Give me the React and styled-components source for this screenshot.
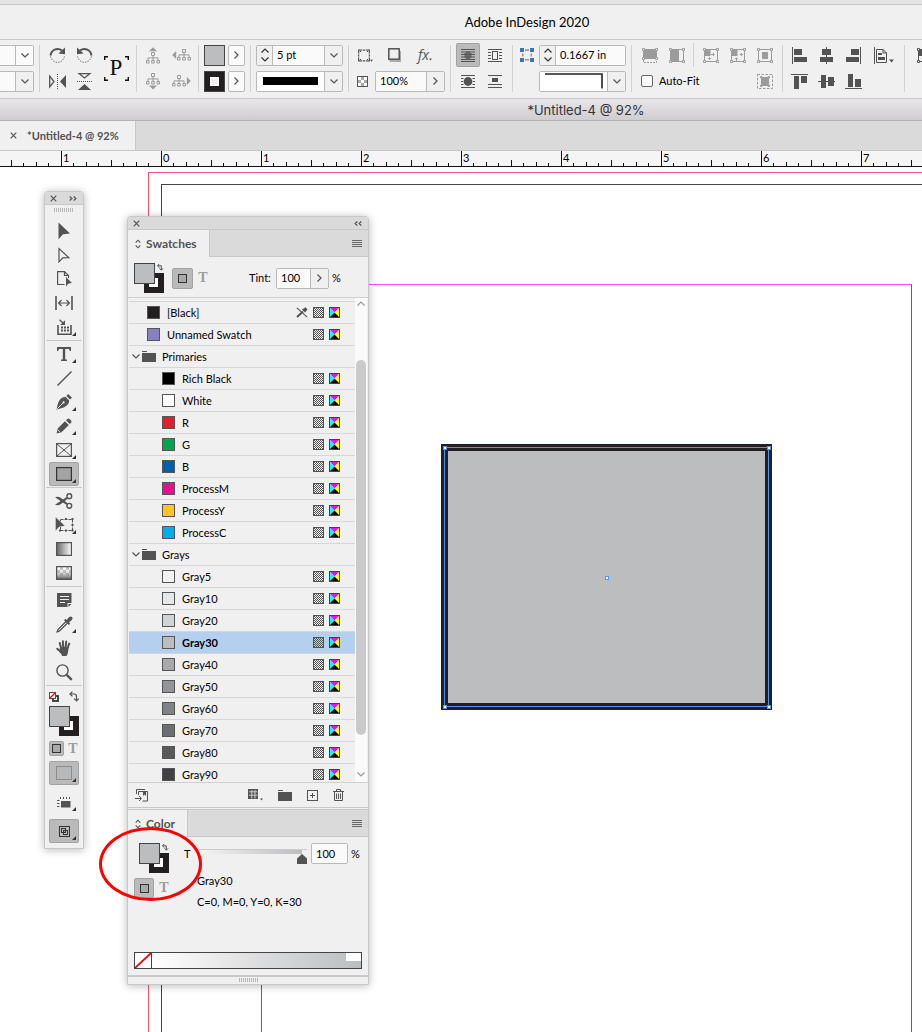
import React, { useEffect, useState } from "react";
import styled, { createGlobalStyle, css } from "styled-components";

const ink = "#535353";
const faint = "#9b9b9b";
const line = "#c8c8c8";

const Global = createGlobalStyle`
  * { box-sizing: border-box; }
  body { margin: 0; background: #fff; font-family: Lato, "Liberation Sans", sans-serif; font-size: 11px; line-height: 16px; color: #000; }
  button, input { font: inherit; color: inherit; padding: 0; margin: 0; }
  button { background: none; border: 0; }
  svg { display: block; flex: none; }
  ul { list-style: none; margin: 0; padding: 0; }
`;

/* ---------- application frame ---------- */
const Frame = styled.div`
  display: flex;
  flex-direction: column;
  min-height: 100vh;
  overflow: hidden;
`;
const MenuStrip = styled.div`
  height: 5px;
  background: #e4e4e4;
  border-bottom: 1px solid ${line};
`;
const AppTitle = styled.header`
  height: 35px;
  line-height: 34px;
  padding-left: 132px;
  text-align: center;
  font-size: 13px;
  background: #f0f0f0;
  border-bottom: 1px solid ${line};
`;
const DocTitle = styled.div`
  height: 22px;
  line-height: 23px;
  padding-left: 250px;
  text-align: center;
  font-family: Inter, sans-serif;
  font-size: 13px;
  color: #333;
  background: linear-gradient(#e9e6ea, #cfcdd0);
  border-bottom: 1px solid #b3b1b4;
`;
const TabBar = styled.nav`
  display: flex;
  height: 30px;
  background: #dadada;
  border-bottom: 1px solid ${line};
`;
const DocTab = styled.div`
  display: flex;
  align-items: center;
  gap: 10px;
  width: 136px;
  padding-left: 10px;
  font-weight: 700;
  color: ${ink};
  background: #f0f0f0;
  border-right: 1px solid ${line};
`;

/* ---------- control bar ---------- */
const ControlBar = styled.div`
  display: flex;
  align-items: center;
  height: 59px;
  padding-bottom: 2px;
  background: #f0f0f0;
  border-bottom: 1px solid ${line};
  overflow: hidden;
`;
const Divider = styled.div`
  flex: none;
  width: 1px;
  height: ${(p) => p.$h || 47}px;
  margin: 0 ${(p) => p.$gap || 0}px;
  background: #d0d0d0;
`;
const Group = styled.div`
  flex: none;
  display: flex;
  flex-direction: column;
  width: ${(p) => p.$w}px;
  padding-left: ${(p) => p.$pad || 0}px;
`;
const GroupRow = styled.div`
  display: flex;
  align-items: center;
  height: 26px;
  gap: ${(p) => p.$gap || 0}px;
`;
const IconButton = styled.button`
  flex: none;
  display: flex;
  align-items: center;
  justify-content: center;
  width: ${(p) => p.$w || 27}px;
  height: ${(p) => p.$h || 24}px;
  color: ${(p) => (p.$faint ? faint : ink)};
`;
const Pressed = css`
  background: #bababa;
  border: 1px solid #a3a3a3;
  border-radius: 2px;
`;
const ToggleButton = styled(IconButton)`
  ${(p) => p.$on && Pressed}
`;
const FxButton = styled(IconButton)`
  font-family: "Open Sans", sans-serif;
  font-size: 14px;
  font-style: italic;
`;
const Combo = styled.div`
  display: flex;
  flex: none;
  width: ${(p) => p.$w}px;
  height: 21px;
  background: #fafafa;
  border: 1px solid #b9b9b9;
  border-radius: 2px;
  overflow: hidden;
  ${(p) => p.$cut && "border-left: 0; border-radius: 0 2px 2px 0;"}
`;
const ComboInput = styled.input`
  flex: 1;
  min-width: 0;
  padding-left: 4px;
  border: 0;
  background: #fafafa;
  outline: 0;
`;
const ComboArrow = styled.button`
  flex: none;
  display: flex;
  align-items: center;
  justify-content: center;
  width: 18px;
  background: ${(p) => (p.$light ? "#fafafa" : "#f0f0f0")};
  border-left: 1px solid #b9b9b9;
`;
const Spinner = styled.div`
  display: flex;
  flex-direction: column;
  justify-content: center;
  align-items: center;
  gap: 4px;
  width: 16px;
  background: #f0f0f0;
  border-right: 1px solid #b9b9b9;
`;
const SpinButton = styled.button`
  display: block;
  height: 5px;
`;
const StrokePreview = styled.button`
  flex: 1;
  display: flex;
  align-items: center;
  justify-content: center;
  background: #fff;
`;
const ArrowButton = styled(IconButton)`
  width: 17px;
  height: 21px;
  background: #fafafa;
  border: 1px solid #b9b9b9;
  border-radius: 2px;
`;
const CheckLabel = styled.label`
  display: flex;
  align-items: center;
  gap: 6px;
  width: 112px;
  padding-left: 5px;
`;
const Check = styled.input`
  appearance: none;
  width: 12px;
  height: 12px;
  background: #fafafa;
  border: 1px solid #666;
  border-radius: 2px;
`;

/* ---------- ruler ---------- */
const RulerBar = styled.div`
  display: flex;
  height: 16px;
  padding-left: 61px;
  background: #f5f5f5;
  border-bottom: 1px solid #111;
  overflow: hidden;
`;
const Inch = styled.div`
  position: relative;
  flex: none;
  width: 100px;
  height: 15px;
  padding-left: 1px;
  line-height: 13px;
  border-left: 1px solid #111;
  &:first-child { margin-left: -100px; }
`;
const Ticks = styled.svg`
  position: absolute;
  left: 0;
  bottom: 0;
`;

/* ---------- document canvas ---------- */
const Canvas = styled.main`
  position: relative;
  flex: 1;
  min-height: 865px;
  background: #fff;
  overflow: hidden;
`;
const Bleed = styled.div`
  position: absolute;
  inset: 5px -40px -40px 148px;
  border: 1px solid #f0596b;
`;
const Page = styled.div`
  position: absolute;
  inset: 17px -30px -30px 161px;
  border: 1px solid #444;
`;
const Margins = styled.div`
  position: absolute;
  inset: 117px auto -30px 261px;
  width: 651px;
  border: 1px solid #9438e0;
  border-top-color: #ff4dff;
`;
const Shape = styled.div`
  position: absolute;
  left: 441px;
  top: 277px;
  width: 331px;
  height: 266px;
  padding: 3px;
  background: #231f20;
`;
const ShapeFill = styled.div`
  width: 100%;
  height: 100%;
  background: #bcbdbf;
  border: 4px solid #231f20;
  outline: 1px solid #4b95ff;
  outline-offset: -1px;
`;
const Handle = styled.span`
  position: absolute;
  width: 4px;
  height: 4px;
  background: #fff;
  border: 1px solid #4b95ff;
  ${(p) => p.$at}
`;

/* ---------- floating panels ---------- */
const Floating = styled.section`
  position: absolute;
  left: ${(p) => p.$x}px;
  top: ${(p) => p.$y}px;
  width: ${(p) => p.$w}px;
  background: #f0f0f0;
  border: 1px solid ${line};
  border-radius: 4px 4px 0 0;
  box-shadow: 0 1px 8px rgba(0, 0, 0, 0.28);
`;
const PanelHead = styled.div`
  display: flex;
  align-items: center;
  justify-content: space-between;
  height: 13px;
  padding: 0 6px 0 5px;
  background: #dadada;
  border-bottom: 1px solid ${line};
  border-radius: 3px 3px 0 0;
  color: #666;
`;
const HeadButton = styled.button`
  display: block;
  color: ${ink};
`;
const Grip = styled.div`
  width: 19px;
  height: 4px;
  margin: ${(p) => p.$m};
  background: repeating-linear-gradient(90deg, #b8b8b8 0 1px, transparent 1px 2px);
`;
const ToolButton = styled.button`
  position: relative;
  display: flex;
  align-items: center;
  justify-content: center;
  width: 30px;
  height: 24px;
  margin-left: 4px;
  color: ${ink};
  ${(p) => p.$on && Pressed}
  ${(p) => p.$more && css`
    &::after {
      content: "";
      position: absolute;
      right: ${p.$on ? 2 : 3}px;
      bottom: ${p.$on ? 2 : 3}px;
      border: 2px solid transparent;
      border-right-color: #333;
      border-bottom-color: #333;
    }
  `}
`;
const ToolRule = styled.div`
  height: 1px;
  margin: 1px;
  background: ${line};
`;
const ToolRow = styled.div`
  display: flex;
  align-items: center;
  justify-content: space-between;
  height: ${(p) => p.$h}px;
  padding: 0 4px;
`;
const ToolStack = styled.div`
  display: flex;
  flex-direction: column;
  gap: 5px;
  padding: 0 0 5px;
`;
const GlyphT = styled.span`
  width: 12px;
  text-align: center;
  font-family: "Liberation Serif", serif;
  font-weight: 700;
  font-size: 14px;
  color: ${faint};
`;

const TabRow = styled.div`
  display: flex;
  height: 27px;
  background: #f0f0f0;
`;
const PanelTab = styled.h2`
  display: flex;
  align-items: center;
  gap: 5px;
  width: ${(p) => p.$w}px;
  margin: 0;
  padding-left: 7px;
  font-size: 12px;
  font-weight: 700;
  color: ${ink};
`;
const TabRest = styled.div`
  flex: 1;
  display: flex;
  align-items: center;
  justify-content: flex-end;
  padding-right: 6px;
  background: #dadada;
  border-left: 1px solid ${line};
  border-bottom: 1px solid ${line};
`;
const TintBar = styled.div`
  display: flex;
  align-items: center;
  height: 41px;
  padding: 2px 0 0 6px;
  border-bottom: 1px solid #d0d0d0;
`;
const SmallToggle = styled.button`
  display: flex;
  align-items: center;
  justify-content: center;
  width: ${(p) => p.$s}px;
  height: ${(p) => p.$s}px;
  ${Pressed}
`;
const TintToggles = styled.div`
  display: flex;
  align-items: center;
  gap: 4px;
  margin-left: 8px;
`;
const TintLabel = styled.label`
  width: 27px;
  margin-left: 40px;
  white-space: nowrap;
`;
const ListWrap = styled.div`
  display: flex;
  height: 485px;
  padding: 0 1px;
  border-bottom: 1px solid #d0d0d0;
`;
const List = styled.ul`
  flex: 1;
  padding-top: 3px;
  overflow: hidden;
  background: #f0f0f0;
`;
const SwatchRow = styled.li`
  display: flex;
  align-items: center;
  height: 22px;
  padding: 0 15px 0 ${(p) => (p.$depth ? 33 : 18)}px;
  border-top: 1px solid #d6d6d6;
  background: ${(p) => (p.$on ? "#b4d0ee" : "transparent")};
  font-weight: ${(p) => (p.$on ? 700 : 400)};
`;
const FolderRow = styled(SwatchRow)`
  gap: 2px;
  padding-left: 3px;
`;
const FolderIcon = styled.span`
  color: ${ink};
`;
const FolderName = styled.span`
  padding-left: 4px;
`;
const Chip = styled.span`
  width: 13px;
  height: 13px;
  margin-right: 7px;
  background: ${(p) => p.$c};
  border: 1px solid #555;
`;
const Name = styled.span`
  flex: 1;
`;
const Marks = styled.span`
  display: flex;
  align-items: center;
  gap: 5px;
  color: ${ink};
`;
const Scroll = styled.div`
  display: flex;
  flex-direction: column;
  align-items: center;
  width: 12px;
  padding: 3px 0 5px;
  background: #fafafa;
`;
const ScrollThumb = styled.div`
  width: 10px;
  height: 375px;
  margin: 54px 0 auto;
  border-radius: 5px;
  background: #cacaca;
`;
const PanelFoot = styled.div`
  display: flex;
  align-items: center;
  height: 25px;
  padding: 0 24px 0 7px;
  border-bottom: 1px solid ${line};
`;
const FootButtons = styled.div`
  display: flex;
  align-items: center;
  gap: 15px;
  margin-left: auto;
`;
const ColorPanel = styled.div`
  position: relative;
  margin-top: 1px;
  border-top: 1px solid ${line};
`;
const ColorBody = styled.div`
  display: flex;
  flex-direction: column;
  justify-content: space-between;
  height: 140px;
  padding: 6px;
  border-bottom: 2px solid ${line};
`;
const ColorTop = styled.div`
  display: flex;
`;
const ColorSide = styled.div`
  width: 50px;
`;
const SideSwatch = styled.div`
  padding-left: 5px;
  margin-bottom: 5px;
`;
const SideToggle = styled.div`
  display: flex;
  align-items: center;
  gap: 4px;
`;
const ColorMain = styled.div`
  flex: 1;
`;
const SliderRow = styled.div`
  display: flex;
  align-items: center;
  height: 21px;
  margin-bottom: 6px;
`;
const SliderLabel = styled.label`
  width: 15px;
`;
const Slider = styled.input`
  appearance: none;
  width: 108px;
  height: 21px;
  margin-right: 4px;
  background: none;
  &::-webkit-slider-runnable-track {
    height: 5px;
    margin-bottom: 4px;
    border-top: 1px solid #ccc;
    background: linear-gradient(90deg, #f4f4f4, #bcbdbf) 0 0 / 103px 4px no-repeat;
  }
  &::-webkit-slider-thumb {
    appearance: none;
    width: 10px;
    height: 10px;
    margin-top: 4px;
    background: ${ink};
    clip-path: polygon(50% 0, 100% 45%, 100% 100%, 0 100%, 0 45%);
  }
`;
const Percent = styled.span`
  padding-left: 3px;
`;
const Readout = styled.p`
  margin: 0;
  padding-left: 13px;
  line-height: 21px;
`;
const Ramp = styled.button`
  display: flex;
  justify-content: space-between;
  width: 100%;
  height: 17px;
  border: 1px solid #444;
  background: linear-gradient(90deg, #fff 18px, #bcbdbf);
`;
const White = styled.span`
  width: 15px;
  height: 8px;
  background: #fff;
`;
const Annotation = styled.div`
  position: absolute;
  left: -29px;
  top: 17px;
  width: 103px;
  height: 74px;
  border: 3px solid #f00;
  border-radius: 50%;
`;

/* ---------- drawings ---------- */
const I = ({ w, h, children, ...rest }) => (
  <svg width={w} height={h} viewBox={`0 0 ${w} ${h}`} fill="none" stroke="currentColor" aria-hidden="true" {...rest}>
    {children}
  </svg>
);
const F = { fill: "currentColor", stroke: "none" };

const Down = ({ c = ink }) => <I w={8} h={5} stroke={c}><path d="M.5 .5L4 4L7.5 .5" strokeWidth="1.2" /></I>;
const Up = ({ c = "#333" }) => <I w={8} h={5} stroke={c}><path d="M.5 4.5L4 1L7.5 4.5" strokeWidth="1.2" /></I>;
const Right = () => <I w={5} h={8} stroke={ink}><path d="M.5 .5L4 4L.5 7.5" strokeWidth="1.2" /></I>;
const Close = ({ s = 7 }) => <I w={s} h={s}><path d={`M.7 .7L${s - 0.7} ${s - 0.7}M${s - 0.7} .7L.7 ${s - 0.7}`} strokeWidth="1.2" /></I>;
const DoubleRight = () => <I w={8} h={5}><path d="M.7 .5L2.9 2.5L.7 4.5M4.7 .5L6.9 2.5L4.7 4.5" strokeWidth="1.2" /></I>;
const DoubleLeft = () => <I w={8} h={5}><path d="M3.3 .5L1.1 2.5L3.3 4.5M7.3 .5L5.1 2.5L7.3 4.5" strokeWidth="1.2" /></I>;
const UpDown = () => <I w={6} h={10}><path d="M.7 3.6L3 1.2L5.3 3.6M.7 6.4L3 8.8L5.3 6.4" strokeWidth="1.1" /></I>;
const MenuIcon = () => <I w={10} h={8} stroke="#666"><path d="M0 1.5H10M0 3.5H10M0 5.5H10M0 7.5H10" /></I>;

const Rotate = ({ ccw }) => (
  <I w={17} h={17}><g transform={ccw ? "translate(17 0) scale(-1 1)" : undefined}>
    <path d="M1.6 8.5A7 7 0 0 1 12.8 3.4" strokeWidth="2" />
    <path d="M16 .6V7.2L9.4 6.4Z" {...F} />
    <path d="M1.6 9.5A7 7 0 0 0 15.4 9.5" strokeDasharray="1.2 1.4" />
  </g></I>
);
const FlipH = () => <I w={17} h={15}><path d="M.7 2.2L5 7.5L.7 12.8Z" strokeWidth="1.3" /><path d="M8.5 0V15" strokeDasharray="1 1" /><path d="M17 1V14L11 7.5Z" {...F} /></I>;
const FlipV = () => <I w={15} h={17}><path d="M2.2 .7H12.8L7.5 5Z" strokeWidth="1.3" /><path d="M0 8.5H15" strokeDasharray="1 1" /><path d="M1 17H14L7.5 11Z" {...F} /></I>;
const ParaP = () => (
  <I w={25} h={25} stroke="#111"><path d="M.7 4V.7H4M21 .7H24.3V4M24.3 21V24.3H21M4 24.3H.7V21" strokeWidth="1.4" />
    <text x="5.5" y="19" fontFamily="Liberation Serif, serif" fontSize="23" fill="#111" stroke="none">P</text></I>
);
const tree = <path d="M5.5 .5H8.5V3.5H5.5ZM7 3.5V6M2 8V5.9H12V8M7 6V8M.5 8.5H3V11H.5ZM5.7 8.5H8.3V11H5.7ZM11 8.5H13.5V11H11Z" />;
const TreeUp = () => <I w={14} h={17}><path d="M3 4.2H11L7 .2Z" {...F} /><g transform="translate(0 5)">{tree}</g></I>;
const TreeDown = () => <I w={14} h={17}>{tree}<path d="M3 12.6H11L7 16.6Z" {...F} /></I>;
const TreeLeft = () => <I w={19} h={12}><path d="M4.2 2V10L.2 6Z" {...F} /><g transform="translate(5 0)">{tree}</g></I>;
const TreeRight = () => <I w={19} h={12}>{tree}<path d="M14.8 2V10L18.8 6Z" {...F} /></I>;

const FillBox = () => <I w={21} h={21}><rect x=".5" y=".5" width="20" height="20" fill="#bcbdbf" stroke="#444" /></I>;
const StrokeBox = () => <I w={21} h={21} stroke="none"><rect x=".5" y=".5" width="20" height="20" fill="#231f20" stroke="#444" /><rect x="6" y="6" width="9" height="9" fill="#fff" /><rect x="7.5" y="7.5" width="6" height="6" fill="#eee" /></I>;
const FillStroke = ({ swap = true }) => (
  <I w={30} h={30} stroke="none">
    <rect x="10" y="10" width="20" height="20" fill="#231f20" />
    <rect x="15" y="15" width="9" height="9" fill="#fff" />
    <rect x=".5" y=".5" width="20" height="20" fill="#bcbdbf" stroke="#444" />
    {swap && <path d="M24 2.8H27.3V7M25.2 1L23.4 2.8L25.2 4.6M25.5 5.4L27.3 7.2L29.1 5.4" fill="none" stroke={ink} />}
  </I>
);
const MiniBox = ({ s = 9 }) => <I w={s} h={s}><rect x=".5" y=".5" width={s - 1} height={s - 1} fill="#aaa" stroke="#333" /></I>;

const CornerIcon = () => <I w={15} h={13}><rect x=".6" y="1.1" width="10.8" height="10.8" strokeWidth="1.2" /><path d="M4 1H5M7 1H8M4 12H5M7 12H8M.5 4.5V5.5M.5 7.5V8.5M11.5 4.5V5.5M11.5 7.5V8.5" stroke="#f0f0f0" strokeWidth="1.4" /><path d="M2 2.5H3.2M9 2.5H10M2 10.5H3.2M9 10.5H10" /><path d="M12 10.8H15L13.5 12.8Z" {...F} /></I>;
const ShadowIcon = () => <I w={13} h={14}><path d="M1.5 13H12.5V3" stroke="#aaa" strokeWidth="2" /><rect x=".8" y=".8" width="10.4" height="10.4" fill="#eee" strokeWidth="1.5" /></I>;
const MoreMark = () => <I w={3} h={12}><path d="M0 9.5H3L1.5 11.5Z" {...F} /></I>;
const CheckerIcon = () => <I w={11} h={11}><rect x=".5" y=".5" width="10" height="10" fill="#fff" /><path d="M4 1h3v3H4zM1 4h3v3H1zM7 4h3v3H7zM4 7h3v3H4z" fill="#aaa" stroke="none" /></I>;
const WrapNone = () => <I w={14} h={13}><path d="M0 .5H14M0 3H14M0 5.5H14M0 8H14M0 10.5H14M0 12.5H14" /><path d="M5 2.5h4v1.5h1.5v5H9v1.6H5V9H3.5V4H5z" {...F} opacity=".75" /></I>;
const WrapBox = () => <I w={14} h={13}><path d="M0 .5H14M0 12.5H14M0 3.5H3M0 6.5H3M0 9.5H3M11 3.5H14M11 6.5H14M11 9.5H14" /><rect x="4.5" y="2.5" width="5" height="8" /></I>;
const WrapShape = () => <I w={14} h={13}><path d="M0 .5H14M0 12.5H14M0 3.5H2.5M0 6.5H2M0 9.5H2.5M11.5 3.5H14M12 6.5H14M11.5 9.5H14" /><circle cx="7" cy="6.5" r="4.4" {...F} /></I>;
const WrapJump = () => <I w={14} h={13}><path d="M0 .5H14M0 9.5H14M0 12.5H14" /><rect x="4" y="3" width="6" height="4" {...F} /></I>;
const BlueCorners = () => <I w={14} h={14} stroke="none"><path d="M0 0h4v4H0zM10 0h4v4h-4zM0 10h4v4H0zM10 10h4v4h-4z" fill="#3f72b8" /><path d="M5 1.3h4v1.6H5zM5 11h4v1.6H5zM2 5.5h1.6v3H2zM10.5 5.5H12v3h-1.5z" fill="#9a9a9a" /></I>;
const nodes = (w, h) => <path d={`M.5 .5h2v2h-2zM${w - 2.5} .5h2v2h-2zM.5 ${h - 2.5}h2v2h-2zM${w - 2.5} ${h - 2.5}h2v2h-2z`} fill="#f0f0f0" />;
const FitFrame = ({ kind }) => (
  <I w={16} h={15}>
    <rect x="1.5" y="1.5" width="13" height={kind === 0 ? 9 : 12} />
    {kind === 0 && <><rect x="1.5" y="1.5" width="13" height="9" fill="currentColor" /><path d="M1.5 12V14.5H14.5V12" strokeDasharray="2 1" />{nodes(16, 12)}</>}
    {kind === 1 && <rect x="2" y="2" width="8" height="11" {...F} />}
    {kind === 2 && <><rect x="2" y="2" width="5.5" height="6" {...F} /><path d="M8 6.5H11M6.5 9V11.5M9.8 5L11.3 6.5L9.8 8M5 10.2L6.5 11.7L8 10.2" /></>}
    {kind === 3 && <><rect x="2" y="2" width="5.5" height="6" {...F} /><path d="M10.5 6.5H13M6.5 10V13M11.8 5L10.3 6.5L11.8 8M5 11.3L6.5 9.8L8 11.3" /></>}
    {kind === 4 && <rect x="5" y="4" width="6" height="7" {...F} />}
    {kind !== 0 && nodes(16, 15)}
  </I>
);
const FitAll = () => <I w={16} h={15}><rect x=".5" y=".5" width="15" height="14" strokeDasharray="2.5 1.5" /><rect x="4" y="3" width="8" height="9" {...F} /><path d="M3.5 2.5h1.5v1.5H3.5zM11 2.5h1.5v1.5H11zM3.5 11h1.5v1.5H3.5zM11 11h1.5v1.5H11z" fill="#f0f0f0" /></I>;
const Align = ({ k }) => {
  const d = {
    l: "M0 0h1v17H0zM2 2h8v6H2zM2 10h13v5H2z",
    c: "M7 0h1v17H7zM3 2h9v6H3zM1 10h13v5H1z",
    r: "M15 0h-1v17h1zM13 2H5v6h8zM13 10H0v5h13z",
    t: "M0 0h17v1H0zM3 2h5v13H3zM10 2h6v7h-6z",
    m: "M0 7h17v1H0zM3 1h5v13H3zM10 3h6v9h-6z",
    b: "M0 14h17v1H0zM3 0h5v13H3zM10 5h6v8h-6z",
  }[k];
  const tall = "lcr".includes(k);
  return <I w={tall ? 15 : 17} h={tall ? 17 : 15}><path d={d} {...F} /></I>;
};
const AlignPage = () => <I w={20} h={17}><path d="M.5 0V17M2.5 2.5H9L12.5 6V15.5H2.5Z" /><path d="M9 2V6H13" /><path d="M4 6H8V8H4ZM4 10H11V13H4Z" {...F} /><path d="M15 12.5H20L17.5 15.5Z" {...F} /></I>;

const Selection = () => <I w={12} h={18}><path d="M.5 .5V17.2L5 12.2L12 11.5Z" {...F} /></I>;
const Direct = () => <I w={12} h={17}><path d="M1 1.6V14.8L4.8 10.9L10.8 10.6Z" strokeWidth="1.2" /></I>;
const PageTool = () => <I w={15} h={16}><path d="M7.5 13.5H.6V.6H7.5L11.5 4.5V7M7.5 .6V4.5H11.5" strokeWidth="1.2" /><path d="M9 6V15.5L11.5 12.6L15 12Z" {...F} /></I>;
const GapTool = () => <I w={18} h={14}><path d="M1 0V14M17 0V14" strokeWidth="1.6" /><path d="M4 7H14M6.5 4L3.6 7L6.5 10M11.5 4L14.4 7L11.5 10" strokeWidth="1.2" /></I>;
const Collector = () => <I w={15} h={16}><path d="M1 6V15.2H14V6" strokeWidth="1.6" /><path d="M4 8.5H12M4 11.5H12" strokeWidth="2" strokeDasharray="2 1" /><path d="M2.5 .7L6.5 4.5" strokeWidth="1.3" /><path d="M8 1.2V6H3.2Z" {...F} /></I>;
const TypeTool = () => <I w={14} h={14}><path d="M0 0H14V4H12.8L12 2H8.2V12.3L10 12.8V14H4V12.8L5.8 12.3V2H2L1.2 4H0Z" {...F} /></I>;
const LineTool = () => <I w={15} h={15}><path d="M.5 14.5L14.5 .5" strokeWidth="1.4" /></I>;
const PenTool = () => <I w={16} h={16}><path d="M9.4 2.8L13.2 6.6Q13.4 12.4 4.4 14.6L.4 15.7L1.4 11.6Q3.4 3 9.4 2.8Z" {...F} /><path d="M10.4 2L12.2 0L16 3.8L14 5.6Z" {...F} /><path d="M.6 15.4L7.4 8.6" stroke="#f0f0f0" strokeWidth=".9" /><circle cx="7.6" cy="8.4" r="1.1" fill="#f0f0f0" stroke="none" /></I>;
const PencilTool = () => <I w={16} h={16}><path d="M.5 15.5L1.8 10.4L8.9 3.2L12.8 7.1L5.6 14.2Z" {...F} /><path d="M10 2.2L11.6 .7Q12.6 0 13.6 1L15 2.4Q16 3.4 15.3 4.4L13.8 6Z" {...F} /><path d="M2 12L4 14" stroke="#f0f0f0" strokeWidth=".8" /></I>;
const FrameTool = () => <I w={16} h={14}><rect x=".6" y=".6" width="14.8" height="12.8" strokeWidth="1.2" /><path d="M1 1L15 13M15 1L1 13" /></I>;
const RectTool = () => <I w={16} h={14}><rect x=".6" y=".6" width="14.8" height="12.8" fill="#a3a3a3" stroke="#333" strokeWidth="1.2" /></I>;
const ScissorsTool = () => <I w={18} h={16}><circle cx="14.3" cy="3.2" r="2.4" strokeWidth="1.4" /><circle cx="14.3" cy="12.8" r="2.4" strokeWidth="1.4" /><path d="M0 4.2Q3 3 6 5L12.6 10.2L11.3 11.8Z" {...F} /><path d="M0 11.8Q3 13 6 11L12.6 5.8L11.3 4.2Z" {...F} /></I>;
const TransformTool = () => <I w={19} h={16}><rect x="5.5" y="2.5" width="12" height="11" strokeDasharray="3 1" /><path d="M10 1h2v2h-2zM16.5 1h2v2h-2zM16.5 7h2v2h-2zM4 12.5h2v2H4zM10 12.5h2v2h-2zM16.5 12.5h2v2h-2z" {...F} /><path d="M.5 0V14L4 10L10 8.8Z" {...F} stroke="#f0f0f0" strokeWidth=".4" /></I>;
const GradTool = () => <I w={16} h={14}><defs><linearGradient id="gt"><stop stopColor="#666" /><stop offset="1" stopColor="#fff" /></linearGradient></defs><rect x=".6" y=".6" width="14.8" height="12.8" fill="url(#gt)" strokeWidth="1.2" /></I>;
const FeatherTool = () => <I w={16} h={14}><defs><linearGradient id="ft" x2="0" y2="1"><stop stopColor="#fff" stopOpacity="0" /><stop offset="1" stopColor="#555" /></linearGradient></defs><rect x=".6" y=".6" width="14.8" height="12.8" fill="#fff" /><path d="M4 1h3v3H4zM10 1h3v3h-3zM1 4h3v3H1zM7 4h3v3H7zM13 4h2v3h-2zM4 7h3v3H4zM10 7h3v3h-3z" fill="#bbb" stroke="none" /><rect x=".6" y=".6" width="14.8" height="12.8" fill="url(#ft)" strokeWidth="1.2" /></I>;
const NoteTool = () => <I w={15} h={14}><path d="M0 0H14.5V10H10.5V14H0Z" {...F} /><path d="M14.5 11H11.5V14Z" {...F} /><path d="M3 3.5H12M3 6.5H12M3 9.5H8" stroke="#f0f0f0" strokeWidth="1.2" /></I>;
const Dropper = () => <I w={17} h={17}><path d="M10 5.5L2.5 13Q1.5 14 1 16Q3 15.5 4 14.5L11.5 7" strokeWidth="1.2" /><path d="M8 4.2L9.4 2.8L10.6 4L13 1.2Q14.6 -.2 16 1Q17.2 2.4 15.8 4L13 6.4L14.2 7.6L12.8 9Z" {...F} /></I>;
const Hand = () => <I w={16} h={16}><path d="M5.2 8.5L3.8 3M7.2 7.5L6.9 1.3M9.6 7.5L10.2 1.6M11.4 8.5L13.2 3.6M5 12L1.2 8.8" strokeWidth="2" strokeLinecap="round" /><path d="M4.2 7H12.5L12.3 10.5Q12 14 10.5 16H6.3Q5.5 14 3 11.5Z" {...F} /></I>;
const Zoom = () => <I w={17} h={17}><circle cx="6.5" cy="6.5" r="5.6" strokeWidth="1.4" /><path d="M10.8 10.8L15.8 15.8" strokeWidth="2.4" /></I>;
const Defaults = () => <I w={10} h={10}><rect x="4" y="4" width="5" height="5" strokeWidth="1.8" stroke="#333" /><rect x=".5" y=".5" width="6" height="6" fill="#fff" /><path d="M1 6L6 1" stroke="#f00" strokeWidth="1.3" /></I>;
const Swap = () => <I w={10} h={11}><path d="M1 3H5Q7.5 3 7.5 5.5V10M3.4 .6L1 3L3.4 5.4M5.2 7.6L7.5 10L9.8 7.6" strokeWidth="1.2" /></I>;
const NormalFill = () => <I w={16} h={14}><rect x=".5" y=".5" width="15" height="13" fill="#b6b8ba" stroke="#8c8c8c" /></I>;
const ViewOpt = () => <I w={15} h={11}><path d="M0 3.5H2.5M0 6.5H2.5M0 9.5H2.5M3.5 0V2M6.5 0V2M9.5 0V2M12.5 0V2" /><rect x="4" y="4" width="9.5" height="6.5" {...F} /></I>;
const ScreenMode = () => <I w={11} h={11} stroke="#333"><rect x=".5" y=".5" width="10" height="10" /><rect x="2.5" y="2.5" width="4" height="4" /><rect x="4.5" y="4.5" width="4" height="4" /></I>;

const Halftone = () => (
  <I w={11} h={11} shapeRendering="crispEdges"><defs><pattern id="ht" width="2" height="2" patternUnits="userSpaceOnUse"><path d="M0 0h1v1H0zM1 1h1v1H1z" fill="#555" stroke="none" /></pattern></defs>
    <rect x=".5" y=".5" width="10" height="10" fill="url(#ht)" /></I>
);
const Cmyk = () => (
  <I w={11} h={11} stroke="none"><path d="M0 0H11L5.5 5.5Z" fill="#f0f" /><path d="M0 0V11L5.5 5.5Z" fill="#0ff" /><path d="M11 0V11L5.5 5.5Z" fill="#ff0" /><path d="M0 11H11L5.5 5.5Z" fill="#000" /><rect x=".5" y=".5" width="10" height="10" fill="none" stroke="#444" /></I>
);
const NoEdit = () => <I w={12} h={11}><path d="M1 10L7 4.5" strokeWidth="2" /><path d="M6 2.5L9 5.5L11.5 2.5L9.5 .3Z" {...F} /><path d="M.8 .8L11.2 10.2" strokeWidth="1.1" /></I>;
const Folder = () => <I w={14} h={11}><path d="M0 0H5V1H0ZM0 2H14V11H0Z" {...F} /></I>;
const LoadIcon = () => <I w={13} h={13}><path d="M1.5 5V.5H10M3.5 6V2.5H12.5V12H7.5M0 9.5H6M4 7L6.5 9.5L4 12" /><path d="M8 3H11V7L9.5 5.6L8 7Z" {...F} /></I>;
const GridIcon = () => <I w={15} h={12}><rect width="10" height="10" y="0" {...F} /><path d="M1 2.8H9.5M1 6.2H9.5M3.8 1V9.5M7 1V9.5" stroke="#ccc" /><path d="M12 9.5H15L13.5 11.5Z" {...F} /></I>;
const PlusBox = () => <I w={11} h={11}><rect x=".5" y=".5" width="10" height="10" /><path d="M3 5.5H8M5.5 3V8" /></I>;
const Trash = () => <I w={11} h={12}><path d="M0 2.5H11M3.5 2V.5H7.5V2M1.5 3V11.5H9.5V3M3.5 4.5V10M5.5 4.5V10M7.5 4.5V10" /></I>;
const NoneBox = () => <I w={17} h={15}><rect width="17" height="15" fill="#fff" stroke="none" /><path d="M0 15L16 0" stroke="#f00" strokeWidth="1.8" /><path d="M16.5 0V15" stroke="#444" /></I>;

/* ---------- data ---------- */
const swatches = [
  { name: "[Black]", c: "#231f20", locked: true },
  { name: "Unnamed Swatch", c: "#8781bd" },
  { folder: "Primaries" },
  { name: "Rich Black", c: "#000", depth: 1 },
  { name: "White", c: "#fff", depth: 1 },
  { name: "R", c: "#e0202c", depth: 1 },
  { name: "G", c: "#00a550", depth: 1 },
  { name: "B", c: "#0060af", depth: 1 },
  { name: "ProcessM", c: "#e5108c", depth: 1 },
  { name: "ProcessY", c: "#fdc426", depth: 1 },
  { name: "ProcessC", c: "#00aeef", depth: 1 },
  { folder: "Grays" },
  { name: "Gray5", c: "#f1f2f2", depth: 1 },
  { name: "Gray10", c: "#e6e7e8", depth: 1 },
  { name: "Gray20", c: "#d1d3d4", depth: 1 },
  { name: "Gray30", c: "#bcbdbf", depth: 1, on: true },
  { name: "Gray40", c: "#a7a9ac", depth: 1 },
  { name: "Gray50", c: "#939598", depth: 1 },
  { name: "Gray60", c: "#808285", depth: 1 },
  { name: "Gray70", c: "#6d6e71", depth: 1 },
  { name: "Gray80", c: "#58595b", depth: 1 },
  { name: "Gray90", c: "#414042", depth: 1 },
];
const toolGroups = [
  [["Selection", Selection], ["Direct Selection", Direct], ["Page", PageTool], ["Gap", GapTool], ["Content Collector", Collector, 1]],
  [["Type", TypeTool, 1], ["Line", LineTool], ["Pen", PenTool, 1], ["Pencil", PencilTool, 1], ["Rectangle Frame", FrameTool, 1], ["Rectangle", RectTool, 1, 1]],
  [["Scissors", ScissorsTool], ["Free Transform", TransformTool, 1], ["Gradient", GradTool], ["Gradient Feather", FeatherTool]],
  [["Note", NoteTool], ["Eyedropper", Dropper, 1], ["Hand", Hand], ["Zoom", Zoom]],
];

const Btn = ({ label, children, ...rest }) => <IconButton aria-label={label} {...rest}>{children}</IconButton>;
const Steps = () => (
  <Spinner>
    <SpinButton aria-label="Increase"><Up /></SpinButton>
    <SpinButton aria-label="Decrease"><Down c="#333" /></SpinButton>
  </Spinner>
);

function Ruler() {
  const [width, setWidth] = useState(window.innerWidth);
  useEffect(() => {
    const onResize = () => setWidth(window.innerWidth);
    window.addEventListener("resize", onResize);
    return () => window.removeEventListener("resize", onResize);
  }, []);
  /* the origin is the second inch mark; the mark left of the window carries no number */
  const cells = Array.from({ length: Math.ceil((width - 61) / 100) + 1 }, (_, i) => i - 2);
  return (
    <RulerBar>
      {cells.map((n) => (
        <Inch key={n}>{n > -2 && Math.abs(n)}
          <Ticks width="100" height="6" viewBox="0 0 100 6" shapeRendering="crispEdges">
            <path d="M11 3h1v3h-1zM24 2h1v4h-1zM36 3h1v3h-1zM49 0h1v6h-1zM61 3h1v3h-1zM74 2h1v4h-1zM86 3h1v3h-1z" fill="#111" />
          </Ticks>
        </Inch>
      ))}
    </RulerBar>
  );
}

function Controls() {
  return (
    <ControlBar>
      <Group $w={39}>
        <GroupRow><Combo $w={34} $cut><ComboInput aria-label="Scale X" /><ComboArrow $light aria-label="Scale X presets"><Down /></ComboArrow></Combo></GroupRow>
        <GroupRow><Combo $w={34} $cut><ComboInput aria-label="Scale Y" /><ComboArrow aria-label="Scale Y presets"><Down /></ComboArrow></Combo></GroupRow>
      </Group>
      <Divider />
      <Group $w={58} $pad={4}>
        <GroupRow><Btn label="Rotate clockwise"><Rotate /></Btn><Btn label="Rotate counter-clockwise"><Rotate ccw /></Btn></GroupRow>
        <GroupRow><Btn label="Flip horizontal"><FlipH /></Btn><Btn label="Flip vertical"><FlipV /></Btn></GroupRow>
      </Group>
      <Group $w={38}><Btn label="Content" $w={37} $h={52}><ParaP /></Btn></Group>
      <Divider />
      <Group $w={61} $pad={2}>
        <GroupRow><Btn label="Select container" $faint $w={28}><TreeUp /></Btn><Btn label="Select previous" $faint $w={28}><TreeLeft /></Btn></GroupRow>
        <GroupRow><Btn label="Select content" $faint $w={28}><TreeDown /></Btn><Btn label="Select next" $faint $w={28}><TreeRight /></Btn></GroupRow>
      </Group>
      <Divider />
      <Group $w={51} $pad={5}>
        <GroupRow $gap={3}><FillBox /><ArrowButton aria-label="Fill"><Right /></ArrowButton></GroupRow>
        <GroupRow $gap={3}><StrokeBox /><ArrowButton aria-label="Stroke"><Right /></ArrowButton></GroupRow>
      </Group>
      <Divider />
      <Group $w={97} $pad={5}>
        <GroupRow><Combo $w={87}><Steps /><ComboInput aria-label="Stroke weight" defaultValue="5 pt" /><ComboArrow aria-label="Weights"><Down /></ComboArrow></Combo></GroupRow>
        <GroupRow><Combo $w={87}><StrokePreview aria-label="Stroke type"><I w={55} h={8}><rect width="55" height="8" fill="#000" stroke="none" /></I></StrokePreview><ComboArrow aria-label="Stroke types"><Down /></ComboArrow></Combo></GroupRow>
      </Group>
      <Divider />
      <Group $w={101} $pad={2}>
        <GroupRow><Btn label="Corner options" $w={29}><CornerIcon /></Btn><Btn label="Drop shadow" $w={29}><ShadowIcon /></Btn><FxButton aria-label="Effects" $w={32}>fx<MoreMark /></FxButton></GroupRow>
        <GroupRow $gap={1}><Btn label="Opacity" $w={23}><CheckerIcon /></Btn><Combo $w={70}><ComboInput aria-label="Opacity value" defaultValue="100%" /><ComboArrow aria-label="Opacity slider"><Right /></ComboArrow></Combo></GroupRow>
      </Group>
      <Divider />
      <Group $w={61} $pad={5}>
        <GroupRow><ToggleButton aria-label="No text wrap" $on $w={24}><WrapNone /></ToggleButton><Btn label="Wrap bounding box" $w={30}><WrapBox /></Btn></GroupRow>
        <GroupRow><ToggleButton aria-label="Wrap object shape" $w={24}><WrapShape /></ToggleButton><Btn label="Jump object" $w={30}><WrapJump /></Btn></GroupRow>
      </Group>
      <Divider />
      <Group $w={118} $pad={1}>
        <GroupRow><Btn label="Corner shape" $w={25}><BlueCorners /></Btn><Combo $w={87}><Steps /><ComboInput aria-label="Corner size" defaultValue="0.1667 in" /></Combo></GroupRow>
        <GroupRow><Btn as="span" $w={25} /><Combo $w={87}><StrokePreview aria-label="Corner style"><I w={58} h={16} stroke="#222"><path d="M0 1H57V15.5" strokeWidth="1.6" /></I></StrokePreview><ComboArrow aria-label="Corner styles"><Down /></ComboArrow></Combo></GroupRow>
      </Group>
      <Divider />
      <Group $w={150} $pad={4}>
        <GroupRow>
          <Btn label="Fill frame" $faint><FitFrame kind={0} /></Btn><Btn label="Fit content" $faint><FitFrame kind={1} /></Btn>
          <Divider $h={24} $gap={3} />
          <Btn label="Fit frame to content" $faint><FitFrame kind={2} /></Btn><Btn label="Fit content to frame" $faint><FitFrame kind={3} /></Btn><Btn label="Center content" $faint><FitFrame kind={4} /></Btn>
        </GroupRow>
        <GroupRow><CheckLabel><Check type="checkbox" />Auto-Fit</CheckLabel><Btn label="Content-aware fit" $faint $w={34}><FitAll /></Btn></GroupRow>
      </Group>
      <Divider />
      <Group $w={121} $pad={3}>
        <GroupRow><Btn label="Align left"><Align k="l" /></Btn><Btn label="Align centers"><Align k="c" /></Btn><Btn label="Align right"><Align k="r" /></Btn><Btn label="Align to" $w={34}><AlignPage /></Btn></GroupRow>
        <GroupRow><Btn label="Align top"><Align k="t" /></Btn><Btn label="Align middle"><Align k="m" /></Btn><Btn label="Align bottom"><Align k="b" /></Btn></GroupRow>
      </Group>
      <Divider />
      <Group $w={40} $pad={12}>
        <GroupRow><Btn label="Distribute" $w={16}><FitFrame kind={2} /></Btn></GroupRow>
        <GroupRow />
      </Group>
    </ControlBar>
  );
}

function ToolsPanel() {
  return (
    <Floating $x={44} $y={24} $w={40} aria-label="Tools">
      <PanelHead><HeadButton aria-label="Close"><Close /></HeadButton><HeadButton aria-label="Expand"><DoubleRight /></HeadButton></PanelHead>
      <Grip $m="3px auto 7px 9px" />
      {toolGroups.map((g, i) => (
        <React.Fragment key={i}>
          {g.map(([name, Icon, more, on]) => <ToolButton key={name} aria-label={name} $more={more} $on={on}><Icon /></ToolButton>)}
          <ToolRule />
        </React.Fragment>
      ))}
      <ToolRow $h={19}><HeadButton aria-label="Default colors"><Defaults /></HeadButton><HeadButton aria-label="Swap colors"><Swap /></HeadButton></ToolRow>
      <ToolRow $h={30}><FillStroke swap={false} /></ToolRow>
      <ToolRow $h={25}><SmallToggle $s={15} aria-label="Affects container"><MiniBox s={9} /></SmallToggle><GlyphT>T</GlyphT></ToolRow>
      <ToolStack>
        <ToolButton $on $more aria-label="Apply color"><NormalFill /></ToolButton>
        <ToolButton $more aria-label="View options"><ViewOpt /></ToolButton>
        <ToolButton $on $more aria-label="Screen mode"><ScreenMode /></ToolButton>
      </ToolStack>
    </Floating>
  );
}

function SwatchItem({ s }) {
  if (s.folder) return <FolderRow><Down /><FolderIcon><Folder /></FolderIcon><FolderName>{s.folder}</FolderName></FolderRow>;
  return (
    <SwatchRow $depth={s.depth} $on={s.on}>
      <Chip $c={s.c} />
      <Name>{s.name}</Name>
      <Marks>{s.locked && <NoEdit />}<Halftone /><Cmyk /></Marks>
    </SwatchRow>
  );
}

function ColorPanels() {
  return (
    <Floating $x={127} $y={49} $w={242} aria-label="Swatches and color">
      <PanelHead><HeadButton aria-label="Close"><Close /></HeadButton><HeadButton aria-label="Collapse"><DoubleLeft /></HeadButton></PanelHead>
      <TabRow><PanelTab $w={81}><UpDown />Swatches</PanelTab><TabRest><HeadButton aria-label="Swatches menu"><MenuIcon /></HeadButton></TabRest></TabRow>
      <TintBar>
        <FillStroke />
        <TintToggles>
          <SmallToggle $s={21} aria-label="Formatting affects container"><MiniBox /></SmallToggle>
          <GlyphT>T</GlyphT>
        </TintToggles>
        <TintLabel htmlFor="tint">Tint:</TintLabel>
        <Combo $w={53}><ComboInput id="tint" defaultValue="100" /><ComboArrow aria-label="Tint slider"><Right /></ComboArrow></Combo>
        <Percent>%</Percent>
      </TintBar>
      <ListWrap>
        <List>{swatches.map((s) => <SwatchItem key={s.name || s.folder} s={s} />)}</List>
        <Scroll><Up c="#999" /><ScrollThumb /><Down c="#999" /></Scroll>
      </ListWrap>
      <PanelFoot>
        <HeadButton aria-label="Add to library"><LoadIcon /></HeadButton>
        <FootButtons>
          <HeadButton aria-label="Swatch views"><GridIcon /></HeadButton>
          <HeadButton aria-label="New color group"><Folder /></HeadButton>
          <HeadButton aria-label="New swatch"><PlusBox /></HeadButton>
          <HeadButton aria-label="Delete swatch"><Trash /></HeadButton>
        </FootButtons>
      </PanelFoot>
      <ColorPanel>
        <TabRow><PanelTab $w={59}><UpDown />Color</PanelTab><TabRest><HeadButton aria-label="Color menu"><MenuIcon /></HeadButton></TabRest></TabRow>
        <ColorBody>
          <ColorTop>
            <ColorSide>
              <SideSwatch><FillStroke /></SideSwatch>
              <SideToggle><SmallToggle $s={20} aria-label="Color affects container"><MiniBox /></SmallToggle><GlyphT>T</GlyphT></SideToggle>
            </ColorSide>
            <ColorMain>
              <SliderRow>
                <SliderLabel htmlFor="amount">T</SliderLabel>
                <Slider id="amount" type="range" min="0" max="100" defaultValue="100" />
                <Combo $w={37}><ComboInput aria-label="Tint amount" defaultValue="100" /></Combo>
                <Percent>%</Percent>
              </SliderRow>
              <Readout>Gray30</Readout>
              <Readout>C=0, M=0, Y=0, K=30</Readout>
            </ColorMain>
          </ColorTop>
          <Ramp aria-label="Tint ramp"><NoneBox /><White /></Ramp>
        </ColorBody>
        <Grip $m="1px auto 2px" />
        <Annotation />
      </ColorPanel>
    </Floating>
  );
}

export default function App() {
  return (
    <>
      <Global />
      <Frame>
        <MenuStrip />
        <AppTitle>Adobe InDesign 2020</AppTitle>
        <Controls />
        <DocTitle>*Untitled-4 @ 92%</DocTitle>
        <TabBar><DocTab><HeadButton aria-label="Close document"><Close /></HeadButton>*Untitled-4 @ 92%</DocTab></TabBar>
        <Ruler />
        <Canvas>
          <Bleed />
          <Page />
          <Margins />
          <Shape>
            <ShapeFill />
            <Handle $at="left: 2px; top: 2px;" />
            <Handle $at="right: 1px; top: 2px;" />
            <Handle $at="left: 2px; bottom: 1px;" />
            <Handle $at="right: 1px; bottom: 1px;" />
            <Handle $at="left: calc(50% - 2px); top: calc(50% - 1px);" />
          </Shape>
          <ToolsPanel />
          <ColorPanels />
        </Canvas>
      </Frame>
    </>
  );
}
